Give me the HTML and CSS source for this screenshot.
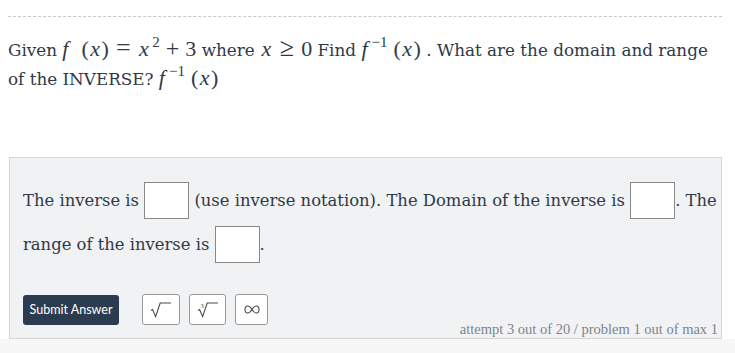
FILE: index.html
```html
<!DOCTYPE html>
<html>
<head>
<meta charset="utf-8">
<link rel="stylesheet" href="styles.css">
</head>
<body>
<div class="page">
  <hr class="dash">
  <div class="question">
    Given <span class="m"><i class="fn">f</i><span class="p">(</span><i class="v">x</i><span class="p">)</span><span class="rel">=</span><i class="v">x</i><sup>2</sup><span class="bin">+</span>3</span> where <span class="m"><i class="v">x</i><span class="rel">≥</span>0</span> Find <span class="m"><i>f</i><sup class="neg">−1</sup><span class="p lp">(</span><i class="v">x</i><span class="p">)</span></span> . What are the domain and range of the INVERSE? <span class="m"><i>f</i><sup class="neg">−1</sup><span class="p lp">(</span><i class="v">x</i><span class="p">)</span></span>
  </div>
  <div class="answer">
    <div class="atext">The inverse is <span class="inp"></span> (use inverse notation). The Domain of the inverse is <span class="inp"></span>. The range of the inverse is <span class="inp"></span>.</div>
    <div class="bottom">
      <div class="btns">
        <button class="submit">Submit Answer</button>
        <span class="sym w38"><svg width="22" height="16" viewBox="0 0 22 16"><path d="M1 8.5 L2.6 7.6 L5.6 14.6 L10.2 1 L21 1" fill="none" stroke="#4a4a4a" stroke-width="1.1"/></svg></span>
        <span class="sym w37"><svg width="22" height="16" viewBox="0 0 22 16"><path d="M1 8.5 L2.6 7.6 L5.6 14.6 L10.2 1 L21 1" fill="none" stroke="#4a4a4a" stroke-width="1.1"/><text x="3.4" y="6.2" font-size="6.5" font-family="Liberation Serif, serif" fill="#4a4a4a">3</text></svg></span>
        <span class="sym w33"><svg width="16" height="9" viewBox="0 0 16 9"><path d="M8 4.5 C6.5 2 5.4 1 3.7 1 C2 1 1 2.5 1 4.5 C1 6.5 2 8 3.7 8 C5.4 8 6.5 7 8 4.5 C9.5 2 10.6 1 12.3 1 C14 1 15 2.5 15 4.5 C15 6.5 14 8 12.3 8 C10.6 8 9.5 7 8 4.5 Z" fill="none" stroke="#4a4a4a" stroke-width="1.1"/></svg></span>
      </div>
      <div class="attempt">attempt 3 out of 20 / problem 1 out of max 1</div>
    </div>
  </div>
  <div class="foot"></div>
</div>
</body>
</html>
```
FILE: styles.css
```css
html, body { margin: 0; padding: 0; background: #fff; }
body { font-family: "DejaVu Serif", Georgia, serif; color: #2e3a48; }
.page { width: 735px; height: 353px; overflow: hidden; }
.dash { margin: 16px 13px 0 8px; border: 0; border-top: 1px dashed #c8c8c8; height: 0; }
.question { margin: 17px 16px 0 8px; font-size: 16.8px; line-height: 27px; }
.m { font-family: "Liberation Serif", serif; font-size: 22px; }
.m i { font-style: italic; }
.m .v { margin: 0 1.5px; }
.m .fn { margin-right: 13px; }
.m .lp { margin-left: 6px; }
.m .rel { font-size: 26px; margin: 0 7px; }
.m .bin { font-size: 24px; margin: 0 6px; }
.m sup { font-size: 15px; line-height: 0; vertical-align: 9px; margin-left: 2px; }
.m sup.neg { margin-left: 4px; }
.answer { margin: 64px 13px 0 9px; height: 182px; box-sizing: border-box; background: #f0f2f4; border: 1px solid #d2d5d9; padding: 21px 2px 0 13px; display: flex; flex-direction: column; }
.atext { font-size: 16.4px; line-height: 44px; }
.inp { display: inline-block; width: 43px; height: 35px; background: #fff; border: 1px solid #888; vertical-align: middle; margin-top: -3px; }
.bottom { margin-top: auto; display: flex; justify-content: space-between; align-items: flex-end; padding-right: 1px; }
.btns { display: flex; align-items: center; margin-bottom: 13px; }
.submit { width: 96px; height: 30px; background: #2c3c50; color: #fff; border: 0; border-radius: 3px; font-family: Lato, "Open Sans", sans-serif; font-size: 12.5px; padding: 0; margin-right: 23px; }
.sym { display: flex; align-items: center; justify-content: center; height: 29px; background: #fff; border: 1px solid #999; border-radius: 3px; margin-right: 9px; }
.w38 { width: 36px; }
.w37 { width: 35px; }
.w33 { width: 31px; }
.attempt { font-family: "Liberation Serif", serif; font-size: 14.5px; color: #7d8590; line-height: 16px; margin-bottom: 1px; }
.foot { height: 14px; background: #f7f7f7; }
```
